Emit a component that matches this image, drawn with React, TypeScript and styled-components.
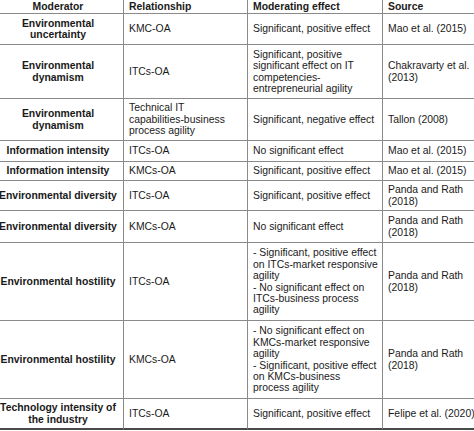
import React from "react";
import styled, { createGlobalStyle } from "styled-components";

const GlobalStyle = createGlobalStyle`
  html, body {
    margin: 0;
    padding: 0;
    background: #ffffff;
  }
`;

type Row = {
  moderator: string;
  relationship: string;
  effect: string;
  source: string;
};

const rows: Row[] = [
  {
    moderator: "Environmental\nuncertainty",
    relationship: "KMC-OA",
    effect: "Significant, positive effect",
    source: "Mao et al. (2015)",
  },
  {
    moderator: "Environmental\ndynamism",
    relationship: "ITCs-OA",
    effect:
      "Significant, positive\nsignificant effect on IT\ncompetencies-\nentrepreneurial agility",
    source: "Chakravarty et al.\n(2013)",
  },
  {
    moderator: "Environmental\ndynamism",
    relationship: "Technical IT\ncapabilities-business\nprocess agility",
    effect: "Significant, negative effect",
    source: "Tallon (2008)",
  },
  {
    moderator: "Information intensity",
    relationship: "ITCs-OA",
    effect: "No significant effect",
    source: "Mao et al. (2015)",
  },
  {
    moderator: "Information intensity",
    relationship: "KMCs-OA",
    effect: "Significant, positive effect",
    source: "Mao et al. (2015)",
  },
  {
    moderator: "Environmental diversity",
    relationship: "ITCs-OA",
    effect: "Significant, positive effect",
    source: "Panda and Rath\n(2018)",
  },
  {
    moderator: "Environmental diversity",
    relationship: "KMCs-OA",
    effect: "No significant effect",
    source: "Panda and Rath\n(2018)",
  },
  {
    moderator: "Environmental hostility",
    relationship: "ITCs-OA",
    effect:
      "- Significant, positive effect\non ITCs-market responsive\nagility\n- No significant effect on\nITCs-business process\nagility",
    source: "Panda and Rath\n(2018)",
  },
  {
    moderator: "Environmental hostility",
    relationship: "KMCs-OA",
    effect:
      "- No significant effect on\nKMCs-market responsive\nagility\n- Significant, positive effect\non KMCs-business\nprocess agility",
    source: "Panda and Rath\n(2018)",
  },
  {
    moderator: "Technology intensity of\nthe industry",
    relationship: "ITCs-OA",
    effect: "Significant, positive effect",
    source: "Felipe et al. (2020)",
  },
];

export default function App() {
  return (
    <>
      <GlobalStyle />
      <Page>
        <Table>
          <Cell $kind="mod" $head>
            Moderator
          </Cell>
          <Cell $head>Relationship</Cell>
          <Cell $head>Moderating effect</Cell>
          <Cell $head>Source</Cell>
          {rows.map((r, i) => {
            const last = i === rows.length - 1;
            return (
              <React.Fragment key={i}>
                <Cell $kind="mod" $last={last}>
                  {r.moderator}
                </Cell>
                <Cell $last={last}>{r.relationship}</Cell>
                <Cell $last={last}>{r.effect}</Cell>
                <Cell $last={last}>{r.source}</Cell>
              </React.Fragment>
            );
          })}
        </Table>
      </Page>
    </>
  );
}

const Page = styled.div`
  width: 474px;
  height: 431px;
  overflow: hidden;
  background: #ffffff;
`;

const Table = styled.div`
  display: grid;
  grid-template-columns: 124px 124px 135px 130px;
  grid-template-rows: 14px 31px 54px 42px 21px 19px 30px 32px 78px 78px 31px;
  width: 513px;
  font-family: "Liberation Sans", Arial, sans-serif;
  font-size: 10.4px;
  line-height: 11.4px;
  color: #1a1a1a;
`;

const Cell = styled.div<{ $kind?: "mod"; $head?: boolean; $last?: boolean }>`
  box-sizing: border-box;
  display: flex;
  align-items: center;
  justify-content: ${(p) => (p.$kind === "mod" ? "center" : "flex-start")};
  text-align: ${(p) => (p.$kind === "mod" ? "center" : "left")};
  padding: ${(p) => (p.$kind === "mod" ? "0 7px 0 0" : "0 0 0 5px")};
  font-weight: ${(p) => (p.$kind === "mod" || p.$head ? 700 : 400)};
  white-space: pre;
  overflow: hidden;
  border-right: 1px solid #8a8a8a;
  border-bottom: ${(p) => (p.$last ? "2px solid #4a4a4a" : "1px solid #8a8a8a")};
`;
